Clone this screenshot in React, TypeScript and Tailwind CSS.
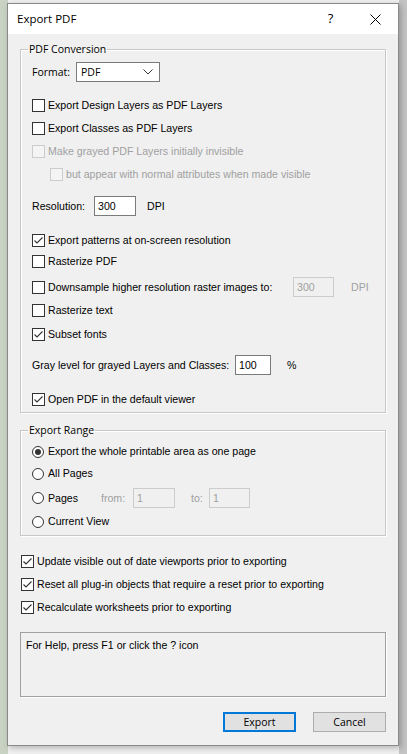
import type { ReactNode } from "react";

const sys = "font-['Liberation_Sans',Arial,sans-serif] text-[10.6px] leading-[13px]";
const ui = "font-['Open_Sans','Noto_Sans',sans-serif]";

type CheckProps = {
  label: string;
  checked?: boolean;
  disabled?: boolean;
  className?: string;
  children?: ReactNode;
  labelClass?: string;
};

/** Windows-style checkbox row. */
function Check({ label, checked = false, disabled = false, className = "", children, labelClass = "" }: CheckProps) {
  return (
    <div className={`flex items-center ${className}`}>
      <span
        className={
          disabled
            ? "flex h-[13px] w-[13px] shrink-0 items-center justify-center border border-[#cccccc] bg-[#f4f4f4]"
            : "flex h-[13px] w-[13px] shrink-0 items-center justify-center border border-[#333333] bg-white"
        }
      >
        {checked ? (
          <svg width="11" height="11" viewBox="0 0 11 11" fill="none">
            <path d="M1.5 5.5 L4 8 L9.5 2.5" stroke="#333" strokeWidth="1.1" />
          </svg>
        ) : null}
      </span>
      <span className={`ml-[3px] whitespace-nowrap ${disabled ? "text-[#a0a0a0]" : "text-black"} ${labelClass}`}>
        {label}
      </span>
      {children}
    </div>
  );
}

type RadioProps = {
  label: string;
  selected?: boolean;
  className?: string;
  labelClass?: string;
  children?: ReactNode;
};

/** Windows-style radio row. */
function Radio({ label, selected = false, className = "", labelClass = "", children }: RadioProps) {
  return (
    <div className={`flex items-center ${className}`}>
      <span className="flex h-[12px] w-[12px] shrink-0 items-center justify-center rounded-full border border-[#333333] bg-white">
        {selected ? <span className="h-[6px] w-[6px] rounded-full bg-[#333333]" /> : null}
      </span>
      <span className={`ml-[4px] whitespace-nowrap text-black ${labelClass}`}>{label}</span>
      {children}
    </div>
  );
}

type FieldProps = {
  value: string;
  disabled?: boolean;
  className?: string;
};

/** Text input look-alike. */
function Field({ value, disabled = false, className = "" }: FieldProps) {
  return (
    <div
      className={
        disabled
          ? `flex h-[20px] items-center border border-[#cccccc] bg-[#f0f0f0] pl-[3px] text-[#a0a0a0] ${className}`
          : `flex h-[20px] items-center border border-[#7a7a7a] bg-white pl-[3px] text-black ${className}`
      }
    >
      {value}
    </div>
  );
}

export default function App() {
  return (
    <div className="h-[754px] w-[407px] overflow-hidden bg-[linear-gradient(90deg,#c9d3c3_0px,#c9d3c3_8px,#f0f0f0_8px,#f0f0f0_399px,#c4c4c4_399px)] pt-[3px] pl-[7px]">
      <div className="w-[392px] border border-[#8a8a8a] bg-[#f0f0f0] shadow-[2px_2px_6px_rgba(0,0,0,0.25)]">
        {/* title bar */}
        <div className="flex h-[30px] items-center bg-white">
          <span className={`${ui} ml-[9px] flex-1 text-[11.5px] text-black`}>Export PDF</span>
          <span className={`${ui} flex h-[30px] w-[45px] items-center justify-center text-[13px] text-black`}>?</span>
          <span className="flex h-[30px] w-[45px] items-center justify-center">
            <svg width="11" height="11" viewBox="0 0 11 11">
              <path d="M0.5 0.5 L10.5 10.5 M10.5 0.5 L0.5 10.5" stroke="#000" strokeWidth="1" />
            </svg>
          </span>
        </div>

        <div className={`${sys} px-[12px] pt-[8px] pb-[13px]`}>
          <fieldset className="m-0 w-[366px] border border-[#c8c8c8] pb-[6px] pl-[11px] pr-0 pt-0 shadow-[inset_1px_1px_0_white,1px_1px_0_white]">
            <legend className={`${ui} -ml-[4px] px-[1px] text-[10.5px] leading-[14px] text-black`}>PDF Conversion</legend>

            <div className="mt-[6px] flex h-[20px] items-center">
              <span className={`${ui} w-[44px] text-[10.5px]`}>Format:</span>
              <div className="flex h-[20px] w-[84px] items-center justify-between border border-[#7a7a7a] bg-white pl-[4px] pr-[6px]">
                <span className={`${ui} text-[10.5px]`}>PDF</span>
                <svg width="10" height="6" viewBox="0 0 10 6" fill="none">
                  <path d="M0.5 0.5 L5 5 L9.5 0.5" stroke="#333" strokeWidth="1" />
                </svg>
              </div>
            </div>

            <Check className="mt-[17px] h-[13px]" label="Export Design Layers as PDF Layers" />
            <Check className="mt-[10px] h-[13px]" label="Export Classes as PDF Layers" />
            <Check className="mt-[10px] h-[13px]" label="Make grayed PDF Layers initially invisible" disabled />
            <Check
              className="mt-[10px] h-[13px] pl-[18px]"
              label="but appear with normal attributes when made visible"
              disabled
            />

            <div className="mt-[15px] flex h-[20px] items-center">
              <span className="w-[62px]">Resolution:</span>
              <Field value="300" className="w-[42px]" />
              <span className="ml-[11px]">DPI</span>
            </div>

            <Check className="mt-[18px] h-[13px]" label="Export patterns at on-screen resolution" checked />
            <Check className="mt-[8px] h-[13px]" label="Rasterize PDF" />
            <Check className="mt-[9px] h-[20px]" label="Downsample higher resolution raster images to:" labelClass="w-[245px]">
              <Field value="300" disabled className="w-[41px]" />
              <span className="ml-[17px] text-[#a0a0a0]">DPI</span>
            </Check>
            <Check className="mt-[7px] h-[13px]" label="Rasterize text" />
            <Check className="mt-[11px] h-[13px]" label="Subset fonts" checked />

            <div className="mt-[14px] flex h-[20px] items-center">
              <span className="w-[203px]">Gray level for grayed Layers and Classes:</span>
              <Field value="100" className="w-[36px]" />
              <span className="ml-[16px]">%</span>
            </div>

            <Check className="mt-[18px] h-[13px]" label="Open PDF in the default viewer" checked />
          </fieldset>

          <fieldset className="m-0 mt-[10px] w-[366px] border border-[#c8c8c8] pb-[7px] pl-[11px] pr-0 pt-0 shadow-[inset_1px_1px_0_white,1px_1px_0_white]">
            <legend className={`${ui} -ml-[4px] px-[1px] text-[10.5px] leading-[14px] text-black`}>Export Range</legend>
            <Radio className="mt-[8px] h-[13px]" label="Export the whole printable area as one page" selected />
            <Radio className="mt-[9px] h-[13px]" label="All Pages" />
            <Radio className="mt-[8px] h-[20px]" label="Pages" labelClass="w-[53px]">
              <span className="w-[32px] text-[#a0a0a0]">from:</span>
              <Field value="1" disabled className="w-[42px]" />
              <span className="ml-[16px] w-[18px] text-[#a0a0a0]">to:</span>
              <Field value="1" disabled className="w-[41px]" />
            </Radio>
            <Radio className="mt-[7px] h-[13px]" label="Current View" />
          </fieldset>

          <div className="pl-[1px]">
            <Check className="mt-[19px] h-[13px]" label="Update visible out of date viewports prior to exporting" checked />
            <Check
              className="mt-[10px] h-[13px]"
              label="Reset all plug-in objects that require a reset prior to exporting"
              checked
            />
            <Check className="mt-[10px] h-[13px]" label="Recalculate worksheets prior to exporting" checked />
          </div>

          <div className="mt-[18px] h-[65px] w-[366px] border border-[#a0a0a0] pl-[5px] pt-[6px] shadow-[1px_1px_0_white]">
            For Help, press F1 or click the ? icon
          </div>

          <div className="mt-[15px] flex w-[366px] justify-end gap-[17px]">
            <button
              type="button"
              className={`${ui} h-[20px] w-[73px] border-2 border-[#0078d7] bg-[#e1e1e1] text-[10.5px] leading-none text-black`}
            >
              Export
            </button>
            <button
              type="button"
              className={`${ui} h-[20px] w-[73px] border border-[#adadad] bg-[#e1e1e1] text-[10.5px] leading-none text-black`}
            >
              Cancel
            </button>
          </div>
        </div>
      </div>
    </div>
  );
}
